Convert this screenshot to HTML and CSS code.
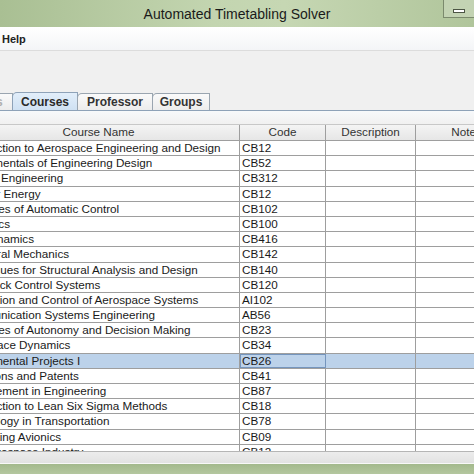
FILE: index.html
```html
<!DOCTYPE html>
<html lang="en">
<head>
    <meta charset="UTF-8">
    <meta name="viewport" content="width=device-width, initial-scale=1.0">
    <title>Automated Timetabling Solver</title>
    <link rel="stylesheet" href="styles.css">
</head>
<body>
    <div class="window">
        <div class="titlebar">
            <span class="title">Automated Timetabling Solver</span>
            <div class="min-btn"><span></span></div>
        </div>

        <div class="menubar">
            <span class="menu-item">Help</span>
        </div>

        <div class="toolbar-space"></div>

        <!-- Tabs -->
        <div class="tabs">
            <div class="tab tab-cut"><span>s</span></div>
            <div class="tab selected">Courses</div>
            <div class="tab">Professor</div>
            <div class="tab">Groups</div>
        </div>

        <div class="panel">
            <div class="table-wrap">
                <div class="grid">
                    <div class="row head">
                        <div class="cell">Course Name</div>
                        <div class="cell">Code</div>
                        <div class="cell">Description</div>
                        <div class="cell">Notes</div>
                    </div>
                    <div class="row"><div class="cell">Introduction to Aerospace Engineering and Design</div><div class="cell">CB12</div><div class="cell"></div><div class="cell"></div></div>
                    <div class="row"><div class="cell">Fundamentals of Engineering Design</div><div class="cell">CB52</div><div class="cell"></div><div class="cell"></div></div>
                    <div class="row"><div class="cell">Human Engineering</div><div class="cell">CB312</div><div class="cell"></div><div class="cell"></div></div>
                    <div class="row"><div class="cell">Nuclear Energy</div><div class="cell">CB12</div><div class="cell"></div><div class="cell"></div></div>
                    <div class="row"><div class="cell">Principles of Automatic Control</div><div class="cell">CB102</div><div class="cell"></div><div class="cell"></div></div>
                    <div class="row"><div class="cell">Acoustics</div><div class="cell">CB100</div><div class="cell"></div><div class="cell"></div></div>
                    <div class="row"><div class="cell">Aerodynamics</div><div class="cell">CB416</div><div class="cell"></div><div class="cell"></div></div>
                    <div class="row"><div class="cell">Structural Mechanics</div><div class="cell">CB142</div><div class="cell"></div><div class="cell"></div></div>
                    <div class="row"><div class="cell">Techniques for Structural Analysis and Design</div><div class="cell">CB140</div><div class="cell"></div><div class="cell"></div></div>
                    <div class="row"><div class="cell">Feedback Control Systems</div><div class="cell">CB120</div><div class="cell"></div><div class="cell"></div></div>
                    <div class="row"><div class="cell">Navigation and Control of Aerospace Systems</div><div class="cell">AI102</div><div class="cell"></div><div class="cell"></div></div>
                    <div class="row"><div class="cell">Communication Systems Engineering</div><div class="cell">AB56</div><div class="cell"></div><div class="cell"></div></div>
                    <div class="row"><div class="cell">Principles of Autonomy and Decision Making</div><div class="cell">CB23</div><div class="cell"></div><div class="cell"></div></div>
                    <div class="row"><div class="cell">Aerospace Dynamics</div><div class="cell">CB34</div><div class="cell"></div><div class="cell"></div></div>
                    <div class="row selected"><div class="cell">Experimental Projects I</div><div class="cell focus">CB26</div><div class="cell"></div><div class="cell"></div></div>
                    <div class="row"><div class="cell">Inventions and Patents</div><div class="cell">CB41</div><div class="cell"></div><div class="cell"></div></div>
                    <div class="row"><div class="cell">Management in Engineering</div><div class="cell">CB87</div><div class="cell"></div><div class="cell"></div></div>
                    <div class="row"><div class="cell">Introduction to Lean Six Sigma Methods</div><div class="cell">CB18</div><div class="cell"></div><div class="cell"></div></div>
                    <div class="row"><div class="cell">Technology in Transportation</div><div class="cell">CB78</div><div class="cell"></div><div class="cell"></div></div>
                    <div class="row"><div class="cell">Integrating Avionics</div><div class="cell">CB09</div><div class="cell"></div><div class="cell"></div></div>
                    <div class="row"><div class="cell">The Aerospace Industry</div><div class="cell">CB12</div><div class="cell"></div><div class="cell"></div></div>
                </div>
            </div>
        </div>

        <div class="statusbar"></div>
        <div class="frame-bottom"></div>
    </div>
</body>
</html>
```

FILE: styles.css
```css
:root {
    --frame-color: #b3c89e;
    --grid-line: #9e9e9e;
    --select-color: #bcd2ea;
}

body {
    margin: 0;
    font-family: 'Liberation Sans', Arial, sans-serif;
    background-color: #f0f0f0;
    color: #1a1a1a;
}

.window {
    width: 474px;
    height: 474px;
    overflow: hidden;
    display: flex;
    flex-direction: column;
}

.titlebar {
    position: relative;
    height: 27px;
    flex: none;
    display: flex;
    align-items: center;
    justify-content: center;
    background: linear-gradient(90deg, #a9bf93 0%, #c3d5b0 45%, #c6d7b3 60%, #b0c59b 100%);
}

.title {
    font-size: 14px;
    color: #1a1a1a;
    margin-top: 1px;
}

.min-btn {
    position: absolute;
    right: -10px;
    top: 0;
    width: 29px;
    height: 17px;
    border: 1px solid #7b8a6d;
    border-top: none;
    background: #c3d3b3;
    display: flex;
    align-items: center;
    justify-content: center;
    padding-right: 10px;
}

.min-btn span {
    width: 10px;
    height: 2px;
    background: #fff;
    border: 1px solid #4c5544;
    margin-top: 4px;
}

.menubar {
    height: 23px;
    flex: none;
    display: flex;
    align-items: center;
    background: linear-gradient(#ffffff, #f4f5f7);
    border-bottom: 1px solid #dcdcdc;
}

.menu-item {
    font-size: 11px;
    font-weight: bold;
    padding-left: 2px;
    color: #222;
}

.toolbar-space {
    height: 40px;
    flex: none;
}

.tabs {
    height: 19px;
    flex: none;
    display: flex;
    align-items: flex-end;
    border-bottom: 1px solid #8ea2b8;
}

.tab {
    height: 17px;
    box-sizing: border-box;
    border: 1px solid #9aa5b0;
    border-bottom: none;
    border-top-left-radius: 5px;
    background: linear-gradient(#fafafa, #ececec);
    font-size: 12px;
    font-weight: bold;
    color: #333;
    display: flex;
    align-items: center;
    justify-content: center;
    margin-right: -1px;
}

.tab-cut {
    width: 13px;
    color: #b0b0b0;
    justify-content: flex-start;
    overflow: hidden;
    border-left: none;
    border-radius: 0;
}

.tab-cut span {
    margin-left: -4px;
}

.tab.selected {
    width: 66px;
    height: 18px;
    background: linear-gradient(#e2eefa, #cfe1f3);
    border-color: #8ea2b8;
    color: #2a2a2a;
}

.tab:nth-child(3) {
    width: 76px;
}

.tab:nth-child(4) {
    width: 58px;
}

.panel {
    flex: 1;
    display: flex;
    flex-direction: column;
    padding-top: 13px;
    background: linear-gradient(#f7f9fb 0px, #f1f1f1 12px);
    min-height: 0;
}

.table-wrap {
    flex: 1;
    overflow: hidden;
    background: #fff;
    border-top: 1px solid #c8c8c8;
    border-bottom: 1px solid #b5b5b5;
}

.grid {
    margin-left: -42px;
    width: 560px;
}

.row {
    display: grid;
    grid-template-columns: 282px 86px 90px 102px;
    height: 15.2px;
    box-sizing: border-box;
    border-bottom: 1px solid var(--grid-line);
    font-size: 11.7px;
}

.row.head {
    height: 16px;
    background: linear-gradient(#f4f4f4, #e6e6e6);
    color: #333;
}

.row.head .cell {
    text-align: center;
    padding-left: 0;
}

.cell {
    box-sizing: border-box;
    border-right: 1px solid var(--grid-line);
    padding-left: 2px;
    white-space: nowrap;
    overflow: hidden;
    line-height: 14px;
}

.row.selected {
    background: var(--select-color);
}

.cell.focus {
    border: 1px solid #7595bd;
    line-height: 12px;
    padding-left: 1px;
}

.statusbar {
    height: 11px;
    flex: none;
    background: linear-gradient(#ececec, #e2e2e2);
    border-bottom: 1px solid #f8f8f8;
}

.frame-bottom {
    height: 10px;
    flex: none;
    background: linear-gradient(#a3b98c, #b4c79f);
}
```
